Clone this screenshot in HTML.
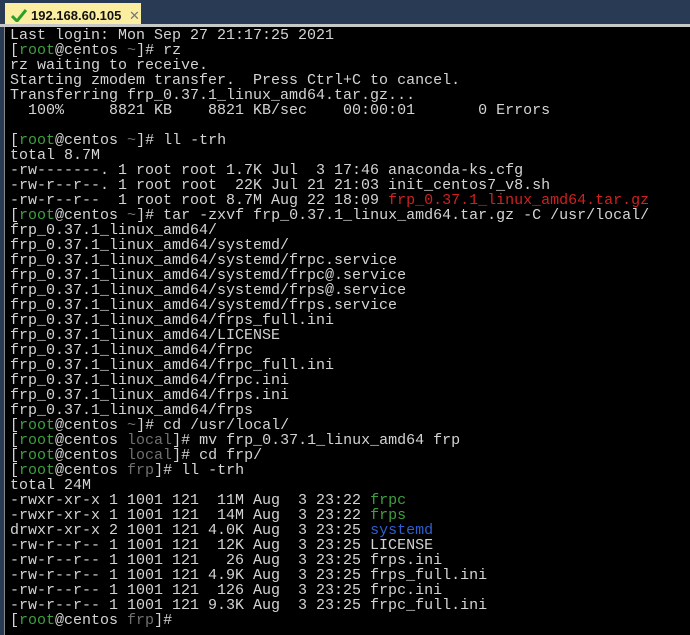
<!DOCTYPE html>
<html><head><meta charset="utf-8"><style>
html,body{margin:0;padding:0;width:690px;height:635px;overflow:hidden;background:#293a55}
.tab{position:absolute;left:5px;top:3px;width:136px;height:24px;background:#fbeea0;font:bold 13px "Liberation Sans",sans-serif;color:#111}
.tab .t{position:absolute;left:26px;top:5px}
.tab .x{position:absolute;left:124px;top:5px;color:#777;font-weight:normal}
.line{position:absolute;left:0;top:24px;width:690px;height:3px;background:#c8c8c8}
.term{position:absolute;left:4px;top:27px;width:686px;height:608px;background:#000;border-left:1px solid #888}
pre{margin:0;position:absolute;left:5px;top:1px;font:15px/15px "Liberation Mono",monospace;color:#d4d4d4;letter-spacing:0}
.g{color:#3fa03f}.d{color:#707070}.r{color:#d02020}.b{color:#2f5fd0}
</style></head><body>
<div class="tab"><svg style="position:absolute;left:6px;top:6px" width="16" height="13" viewBox="0 0 16 13"><path d="M1 7 L6 12 L15 1" stroke="#2aa02a" stroke-width="3" fill="none"/></svg><span class="t">192.168.60.105</span><span class="x">✕</span></div>
<div class="line"></div>
<div class="term"><pre>Last login: Mon Sep 27 21:17:25 2021
[<span class="g">root</span>@centos <span class="d">~</span>]# rz
rz waiting to receive.
Starting zmodem transfer.  Press Ctrl+C to cancel.
Transferring frp_0.37.1_linux_amd64.tar.gz...
  100%     8821 KB    8821 KB/sec    00:00:01       0 Errors

[<span class="g">root</span>@centos <span class="d">~</span>]# ll -trh
total 8.7M
-rw-------. 1 root root 1.7K Jul  3 17:46 anaconda-ks.cfg
-rw-r--r--. 1 root root  22K Jul 21 21:03 init_centos7_v8.sh
-rw-r--r--  1 root root 8.7M Aug 22 18:09 <span class="r">frp_0.37.1_linux_amd64.tar.gz</span>
[<span class="g">root</span>@centos <span class="d">~</span>]# tar -zxvf frp_0.37.1_linux_amd64.tar.gz -C /usr/local/
frp_0.37.1_linux_amd64/
frp_0.37.1_linux_amd64/systemd/
frp_0.37.1_linux_amd64/systemd/frpc.service
frp_0.37.1_linux_amd64/systemd/frpc@.service
frp_0.37.1_linux_amd64/systemd/frps@.service
frp_0.37.1_linux_amd64/systemd/frps.service
frp_0.37.1_linux_amd64/frps_full.ini
frp_0.37.1_linux_amd64/LICENSE
frp_0.37.1_linux_amd64/frpc
frp_0.37.1_linux_amd64/frpc_full.ini
frp_0.37.1_linux_amd64/frpc.ini
frp_0.37.1_linux_amd64/frps.ini
frp_0.37.1_linux_amd64/frps
[<span class="g">root</span>@centos <span class="d">~</span>]# cd /usr/local/
[<span class="g">root</span>@centos <span class="d">local</span>]# mv frp_0.37.1_linux_amd64 frp
[<span class="g">root</span>@centos <span class="d">local</span>]# cd frp/
[<span class="g">root</span>@centos <span class="d">frp</span>]# ll -trh
total 24M
-rwxr-xr-x 1 1001 121  11M Aug  3 23:22 <span class="g">frpc</span>
-rwxr-xr-x 1 1001 121  14M Aug  3 23:22 <span class="g">frps</span>
drwxr-xr-x 2 1001 121 4.0K Aug  3 23:25 <span class="b">systemd</span>
-rw-r--r-- 1 1001 121  12K Aug  3 23:25 LICENSE
-rw-r--r-- 1 1001 121   26 Aug  3 23:25 frps.ini
-rw-r--r-- 1 1001 121 4.9K Aug  3 23:25 frps_full.ini
-rw-r--r-- 1 1001 121  126 Aug  3 23:25 frpc.ini
-rw-r--r-- 1 1001 121 9.3K Aug  3 23:25 frpc_full.ini
[<span class="g">root</span>@centos <span class="d">frp</span>]#</pre></div>
</body></html>
